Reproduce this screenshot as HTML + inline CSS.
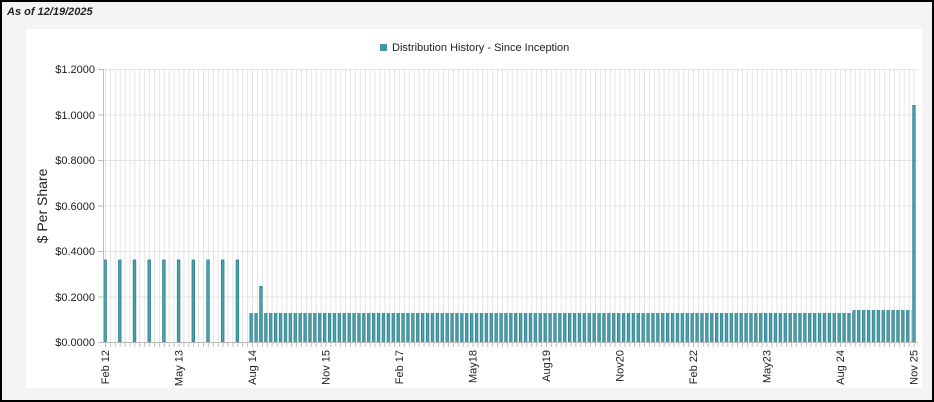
<!DOCTYPE html>
<html><head><meta charset="utf-8"><style>
html,body{margin:0;padding:0;width:934px;height:402px;overflow:hidden;background:#f4f4f4}
svg{display:block;font-family:"Liberation Sans",Arial,sans-serif}
</style></head><body>
<svg width="934" height="402" viewBox="0 0 934 402" xmlns="http://www.w3.org/2000/svg">
<defs>
<pattern id="vg" x="105" y="0" width="4.9" height="402" patternUnits="userSpaceOnUse">
<rect x="0" y="0" width="1" height="402" fill="#e4e4e4"/></pattern>
<pattern id="tk" x="105" y="0" width="4.9" height="402" patternUnits="userSpaceOnUse">
<rect x="0" y="0" width="1" height="402" fill="#c0c0c0"/></pattern>
<pattern id="mb" x="249.5" y="0" width="4.9" height="402" patternUnits="userSpaceOnUse">
<rect x="0" y="0" width="3.3" height="402" fill="#2f7f8b"/><rect x="0.8" y="0" width="1.7" height="402" fill="#4aa3ae"/></pattern>
</defs>
<rect x="0" y="0" width="934" height="402" fill="#000"/>
<rect x="2" y="2" width="930" height="398" fill="#f4f4f4"/>
<text x="7" y="15" font-size="11" font-weight="bold" font-style="italic" fill="#222">As of 12/19/2025</text>
<rect x="26" y="29" width="896" height="359" fill="#fff"/>
<rect x="380" y="44" width="7" height="7" fill="#3a9aa6"/>
<text x="392" y="51" font-size="11" fill="#222">Distribution History - Since Inception</text>
<rect x="104" y="69" width="814" height="273" fill="url(#vg)"/>
<g stroke="#e4e4e4" stroke-width="1">
<line x1="103" y1="69.5" x2="918" y2="69.5"/><line x1="103" y1="115" x2="918" y2="115"/>
<line x1="103" y1="160.5" x2="918" y2="160.5"/><line x1="103" y1="206" x2="918" y2="206"/>
<line x1="103" y1="251.5" x2="918" y2="251.5"/><line x1="103" y1="297" x2="918" y2="297"/>
</g>
<g stroke="#bbb"><line x1="98" y1="69.5" x2="103" y2="69.5"/><line x1="98" y1="115" x2="103" y2="115"/>
<line x1="98" y1="160.5" x2="103" y2="160.5"/><line x1="98" y1="206" x2="103" y2="206"/>
<line x1="98" y1="251.5" x2="103" y2="251.5"/><line x1="98" y1="297" x2="103" y2="297"/>
<line x1="98" y1="342.5" x2="103" y2="342.5"/></g>
<g font-size="11" fill="#222" text-anchor="end">
<text x="95" y="73">$1.2000</text><text x="95" y="119">$1.0000</text><text x="95" y="164">$0.8000</text>
<text x="95" y="210">$0.6000</text><text x="95" y="255">$0.4000</text><text x="95" y="301">$0.2000</text>
<text x="95" y="346">$0.0000</text></g>
<text transform="translate(47,206) rotate(-90)" font-size="14" fill="#222" text-anchor="middle">$ Per Share</text>
<rect x="104" y="342" width="814" height="5" fill="url(#tk)"/>
<g fill="#4aa3ae" stroke="#2f7f8b" stroke-width="0.8">
<rect x="103.8" y="260" width="2.6" height="82"/><rect x="118.5" y="260" width="2.6" height="82"/>
<rect x="133.2" y="260" width="2.6" height="82"/><rect x="147.9" y="260" width="2.6" height="82"/>
<rect x="162.6" y="260" width="2.6" height="82"/><rect x="177.3" y="260" width="2.6" height="82"/>
<rect x="192" y="260" width="2.6" height="82"/><rect x="206.7" y="260" width="2.6" height="82"/>
<rect x="221.4" y="260" width="2.6" height="82"/><rect x="236.1" y="260" width="2.6" height="82"/>
</g>
<rect x="249.5" y="313" width="603" height="29" fill="url(#mb)"/>
<rect x="852.5" y="310" width="58.8" height="32" fill="url(#mb)"/>
<rect x="259.3" y="286" width="3.3" height="56" fill="#2f7f8b"/><rect x="260.1" y="287" width="1.7" height="55" fill="#4aa3ae"/>
<rect x="912.3" y="105" width="3.3" height="237" fill="#2f7f8b"/><rect x="913.1" y="106" width="1.7" height="236" fill="#4aa3ae"/>
<line x1="103.5" y1="69" x2="103.5" y2="342" stroke="#bbb"/>
<line x1="103" y1="342.5" x2="918" y2="342.5" stroke="#bbb"/>
<g font-size="11" fill="#222" text-anchor="end">
<text transform="translate(109,350) rotate(-90)">Feb 12</text>
<text transform="translate(182.5,350) rotate(-90)">May 13</text>
<text transform="translate(256,350) rotate(-90)">Aug 14</text>
<text transform="translate(329.5,350) rotate(-90)">Nov 15</text>
<text transform="translate(403,350) rotate(-90)">Feb 17</text>
<text transform="translate(476.5,350) rotate(-90)">May18</text>
<text transform="translate(550,350) rotate(-90)">Aug19</text>
<text transform="translate(623.5,350) rotate(-90)">Nov20</text>
<text transform="translate(697,350) rotate(-90)">Feb 22</text>
<text transform="translate(770.5,350) rotate(-90)">May23</text>
<text transform="translate(844,350) rotate(-90)">Aug 24</text>
<text transform="translate(917.5,350) rotate(-90)">Nov 25</text>
</g>
</svg>
</body></html>
